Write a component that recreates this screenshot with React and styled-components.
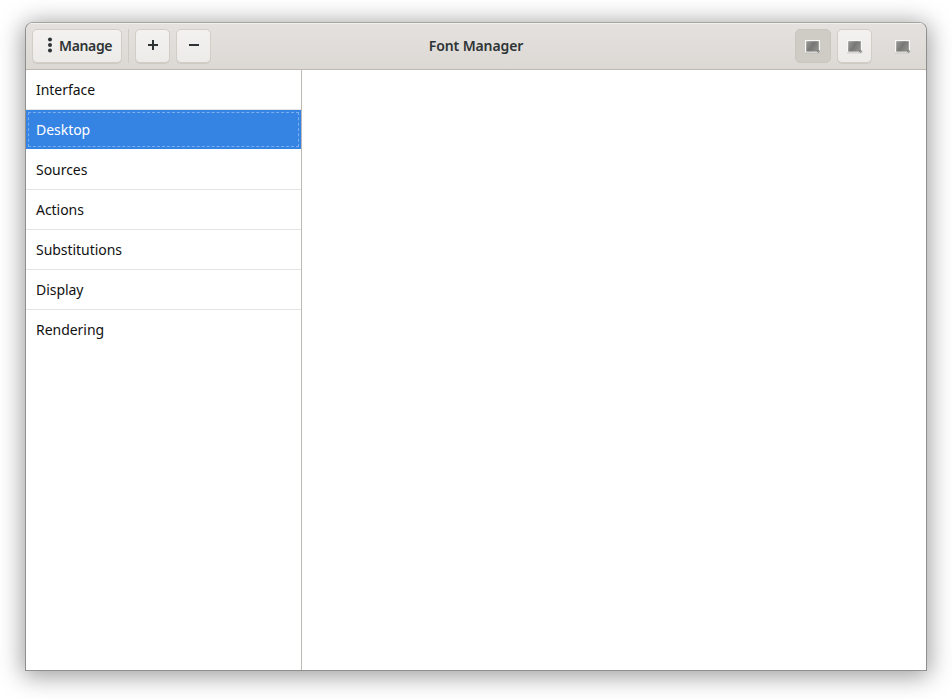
import React from 'react';
import styled, { createGlobalStyle } from 'styled-components';

const GlobalStyle = createGlobalStyle`
  html, body { margin: 0; padding: 0; background: #fff; }
  body { font-family: "Noto Sans", "Liberation Sans", sans-serif; }
`;

const Page = styled.div`
  width: 952px;
  height: 699px;
  padding: 22px 25px 28px 25px;
  box-sizing: border-box;
  overflow: hidden;
`;

const Window = styled.div`
  width: 902px;
  height: 649px;
  display: flex;
  flex-direction: column;
  box-sizing: border-box;
  border: 1px solid #8f8f8d;
  border-top-color: #a5a4a1;
  border-radius: 8px 8px 0 0;
  box-shadow: 0 3px 24px 2px rgba(0, 0, 0, 0.4);
  background: #fff;
  overflow: hidden;
`;

const HeaderBar = styled.header`
  height: 47px;
  flex: none;
  display: flex;
  align-items: center;
  padding: 0 6px;
  position: relative;
  box-sizing: border-box;
  background: linear-gradient(#e4e1de, #dcd9d5);
  border-bottom: 1px solid #bfb8b1;
  box-shadow: inset 0 1px 0 #f3f1ef;
`;

const Button = styled.button`
  height: 34px;
  width: ${p => p.$width}px;
  flex: none;
  display: flex;
  align-items: center;
  justify-content: center;
  padding: 0;
  margin-left: ${p => p.$ml || 0}px;
  box-sizing: border-box;
  border: 1px solid ${p => (p.$active ? '#c9c5bf' : p.$flat ? 'transparent' : '#d2cdc7')};
  border-radius: 5px;
  background: ${p => (p.$active ? '#cfcbc5' : p.$flat ? 'transparent' : 'linear-gradient(#f4f2f1, #ecebe8)')};
  box-shadow: ${p => (p.$active || p.$flat ? 'none' : '0 1px 0 #cfc9c3')};
  color: #2e3436;
  font-family: inherit;
  font-size: 14px;
  font-weight: 600;
  letter-spacing: -0.35px;
`;

const SymbolButton = styled(Button)`
  padding-bottom: 2px;
`;

const MenuButton = styled(SymbolButton)`
  justify-content: flex-start;
  padding-left: 9px;
  gap: 1px;
`;

const Separator = styled.div`
  width: 1px;
  height: 34px;
  flex: none;
  margin: 0 6px;
  background: #cfcac4;
`;

const Title = styled.div`
  position: absolute;
  left: 0;
  right: 0;
  padding-bottom: 2px;
  text-align: center;
  font-size: 14px;
  font-weight: 600;
  letter-spacing: -0.1px;
  color: #2e3436;
  pointer-events: none;
`;

const Spacer = styled.div`
  flex: 1;
`;

const Body = styled.div`
  flex: 1;
  display: flex;
  min-height: 0;
`;

const Sidebar = styled.nav`
  width: 276px;
  flex: none;
  box-sizing: border-box;
  border-right: 1px solid #bdb9b4;
  background: #fff;
`;

const Row = styled.div`
  height: 40px;
  box-sizing: border-box;
  display: flex;
  align-items: center;
  padding-left: 10px;
  position: relative;
  font-size: 14px;
  letter-spacing: -0.04px;
  color: ${p => (p.$selected ? '#fff' : '#111')};
  background: ${p => (p.$selected ? '#3584e4' : '#fff')};
  border-bottom: 1px solid ${p => (p.$last ? 'transparent' : p.$selected ? '#fff' : '#e5e4e3')};
`;

const FocusRing = styled.div`
  position: absolute;
  inset: 2px;
  border: 1px dashed rgba(255, 255, 255, 0.35);
`;

const Content = styled.main`
  flex: 1;
  background: #fff;
`;

const Dots = () => (
  <svg width="16" height="16" viewBox="0 0 16 16" fill="#2e3436">
    <circle cx="8" cy="2.5" r="2" />
    <circle cx="8" cy="8" r="2" />
    <circle cx="8" cy="13.5" r="2" />
  </svg>
);

const Plus = () => (
  <svg width="16" height="16" viewBox="0 0 16 16" fill="#2e3436">
    <path d="M7 3h2v4h4v2H9v4H7V9H3V7h4z" />
  </svg>
);

const Minus = () => (
  <svg width="16" height="16" viewBox="0 0 16 16" fill="#2e3436">
    <path d="M3 7h10v2H3z" />
  </svg>
);

const MissingIcon = ({ id }) => (
  <svg width="16" height="16" viewBox="0 0 16 16">
    <defs>
      <linearGradient id={id} x1="0" y1="0" x2="1" y2="0.5">
        <stop offset="0" stopColor="#9c9c99" />
        <stop offset="0.55" stopColor="#777774" />
        <stop offset="1" stopColor="#8c8c89" />
      </linearGradient>
    </defs>
    <rect x="0" y="2" width="15" height="13" fill="#f8f8f7" />
    <path d="M0 14.8 H15" stroke="#9f9d99" strokeWidth="0.5" fill="none" />
    <rect x="1.2" y="3.2" width="12.6" height="10.4" fill={`url(#${id})`} />
    <path d="M12.4 15 L15.5 11.9 V15 Z" fill="#d6d5d1" />
    <circle cx="13.4" cy="13.3" r="1" fill="#b5b5b2" stroke="#5f5f5d" strokeWidth="0.6" />
  </svg>
);

const items = ['Interface', 'Desktop', 'Sources', 'Actions', 'Substitutions', 'Display', 'Rendering'];

export default function App() {
  return (
    <Page>
      <GlobalStyle />
      <Window>
        <HeaderBar>
          <MenuButton $width={90}><Dots />Manage</MenuButton>
          <Separator />
          <SymbolButton $width={35}><Plus /></SymbolButton>
          <SymbolButton $width={35} $ml={6}><Minus /></SymbolButton>
          <Title>Font Manager</Title>
          <Spacer />
          <Button $width={36} $active><MissingIcon id="i1" /></Button>
          <Button $width={35} $ml={6}><MissingIcon id="i2" /></Button>
          <Button $width={35} $ml={13} $flat><MissingIcon id="i3" /></Button>
        </HeaderBar>
        <Body>
          <Sidebar>
            {items.map((item, i) => (
              <Row key={item} $selected={i === 1} $last={i === items.length - 1}>
                {item}
                {i === 1 && <FocusRing />}
              </Row>
            ))}
          </Sidebar>
          <Content />
        </Body>
      </Window>
    </Page>
  );
}
